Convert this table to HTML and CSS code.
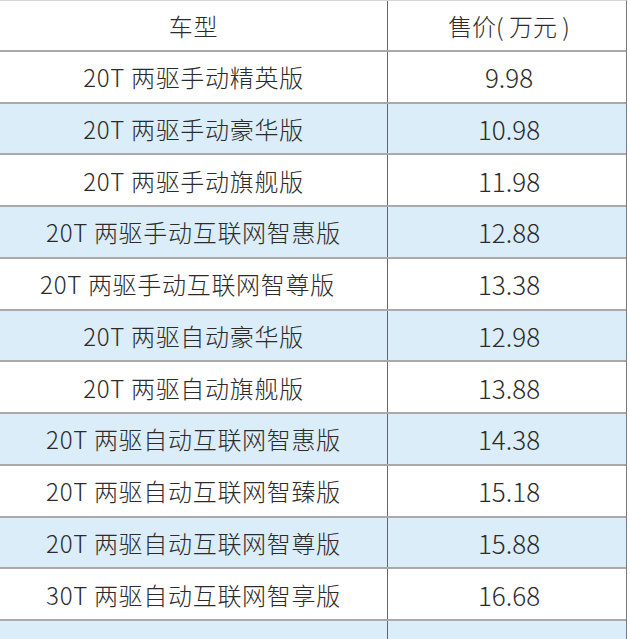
FILE: index.html
```html
<!DOCTYPE html>
<html lang="zh-CN">
<head>
<meta charset="utf-8">
<title>售价表</title>
<link rel="stylesheet" href="styles.css">
</head>
<body>
<div class="table">
  <div class="row head"><div class="cell name">车型</div><div class="cell price">售价( 万元 )</div></div>
  <div class="row"><div class="cell name">20T 两驱手动精英版</div><div class="cell price">9.98</div></div>
  <div class="row blue"><div class="cell name">20T 两驱手动豪华版</div><div class="cell price">10.98</div></div>
  <div class="row"><div class="cell name">20T 两驱手动旗舰版</div><div class="cell price">11.98</div></div>
  <div class="row blue"><div class="cell name">20T 两驱手动互联网智惠版</div><div class="cell price">12.88</div></div>
  <div class="row"><div class="cell name shift">20T 两驱手动互联网智尊版</div><div class="cell price">13.38</div></div>
  <div class="row blue"><div class="cell name">20T 两驱自动豪华版</div><div class="cell price">12.98</div></div>
  <div class="row"><div class="cell name">20T 两驱自动旗舰版</div><div class="cell price">13.88</div></div>
  <div class="row blue"><div class="cell name">20T 两驱自动互联网智惠版</div><div class="cell price">14.38</div></div>
  <div class="row"><div class="cell name">20T 两驱自动互联网智臻版</div><div class="cell price">15.18</div></div>
  <div class="row blue"><div class="cell name">20T 两驱自动互联网智尊版</div><div class="cell price">15.88</div></div>
  <div class="row"><div class="cell name">30T 两驱自动互联网智享版</div><div class="cell price">16.68</div></div>
  <div class="row blue partial"><div class="cell name">30T 两驱自动互联网智尊版</div><div class="cell price">17.68</div></div>
</div>
</body>
</html>
```
FILE: styles.css
```css
html, body {
  margin: 0;
  padding: 0;
  background: #ffffff;
  overflow: hidden;
}
.table {
  width: 627px;
  height: 639px;
  overflow: hidden;
  border-right: 1px solid #7a7a7a;
  border-top: 1px solid #d6d6d6;
  box-sizing: border-box;
  font-family: "Noto Sans CJK SC", "Noto Sans", sans-serif;
  font-weight: 300;
  color: #2b2b2b;
}
.row {
  display: grid;
  grid-template-columns: 388px 1fr;
  height: 51.75px;
  box-sizing: border-box;
  border-bottom: 2px solid #a9a9a9;
  background: #ffffff;
}
.row.head {
  height: 50.75px;
}
.row.blue {
  background: #dbedf8;
}
.row.partial .cell {
  padding-top: 8px;
}
.cell {
  display: flex;
  align-items: center;
  justify-content: center;
  white-space: nowrap;
}
.name {
  font-size: 24px;
  border-right: 1px solid #666666;
  letter-spacing: 0.7px;
}
.name.shift {
  padding-right: 12px;
}
.price {
  font-size: 26px;
  padding-left: 4px;
}
.head .price {
  font-size: 24px;
}
```
